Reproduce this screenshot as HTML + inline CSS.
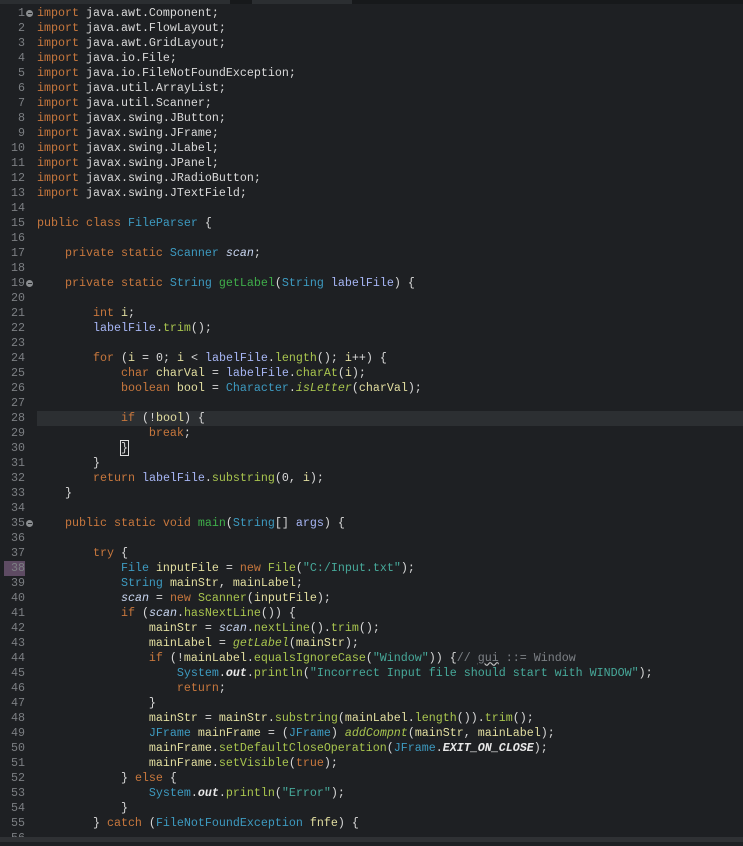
<!DOCTYPE html>
<html><head><meta charset="utf-8"><style>
html,body{margin:0;padding:0;width:743px;height:842px;overflow:hidden;background:#1e2023;}
.top{position:absolute;left:0;top:0;width:743px;height:4px;background:#17191b;}
.top .t1{position:absolute;left:0;top:0;width:230px;height:4px;background:#2b2e31;}
.top .t2{position:absolute;left:252px;top:0;width:100px;height:4px;background:#2b2e31;}
.bot{position:absolute;left:0;top:837px;width:743px;height:5px;background:#2f3134;}
.hl{position:absolute;left:37px;top:410.5px;width:706px;height:15px;background:#2c2f32;}
.ln38{position:absolute;left:4px;top:560.5px;width:21px;height:15px;background:#5e4b63;}
.nums{position:absolute;left:0;top:5.5px;width:25px;text-align:right;}
pre{margin:0;font-family:"Liberation Mono","DejaVu Sans Mono",monospace;font-size:11.67px;line-height:15px;color:#d9d9d9;}
.nums pre{color:#7c7f83;}
.code{position:absolute;left:37px;top:5.5px;}
.fold{position:absolute;left:26px;width:7px;height:7px;border-radius:50%;background:#8a8d90;}
.fold:after{content:"";position:absolute;left:1.5px;top:3px;width:4px;height:1px;background:#2a2c2e;}
.k{color:#c7773d}.t{color:#3d9ac0}.v{color:#e2dea0}.p{color:#a7b6f5}.m{color:#a8c44e}.g{color:#3fae4a}
.s{color:#47a99a}.c{color:#7d8186}.f{color:#c9d6f0;font-style:italic}.b{font-weight:bold;font-style:italic;color:#e8e8e8}.i{font-style:italic}
.n{color:#d9d9d9}.cur{outline:1px solid #e0e0e0;}
.sq{text-decoration:underline wavy #c0c0c0;}
</style></head><body>
<div class="top"><div class="t1"></div><div class="t2"></div></div>
<div class="hl"></div>
<div class="ln38"></div>
<div class="fold" style="top:9.5px"></div>
<div class="fold" style="top:279.5px"></div>
<div class="fold" style="top:519.5px"></div>
<div class="nums"><pre>1
2
3
4
5
6
7
8
9
10
11
12
13
14
15
16
17
18
19
20
21
22
23
24
25
26
27
28
29
30
31
32
33
34
35
36
37
38
39
40
41
42
43
44
45
46
47
48
49
50
51
52
53
54
55
56</pre></div>
<div class="code"><pre><span class="k">import</span> java.awt.Component;
<span class="k">import</span> java.awt.FlowLayout;
<span class="k">import</span> java.awt.GridLayout;
<span class="k">import</span> java.io.File;
<span class="k">import</span> java.io.FileNotFoundException;
<span class="k">import</span> java.util.ArrayList;
<span class="k">import</span> java.util.Scanner;
<span class="k">import</span> javax.swing.JButton;
<span class="k">import</span> javax.swing.JFrame;
<span class="k">import</span> javax.swing.JLabel;
<span class="k">import</span> javax.swing.JPanel;
<span class="k">import</span> javax.swing.JRadioButton;
<span class="k">import</span> javax.swing.JTextField;

<span class="k">public class</span> <span class="t">FileParser</span> {

    <span class="k">private static</span> <span class="t">Scanner</span> <span class="f">scan</span>;

    <span class="k">private static</span> <span class="t">String</span> <span class="g">getLabel</span>(<span class="t">String</span> <span class="p">labelFile</span>) {

        <span class="k">int</span> <span class="v">i</span>;
        <span class="p">labelFile</span>.<span class="m">trim</span>();

        <span class="k">for</span> (<span class="v">i</span> = 0; <span class="v">i</span> &lt; <span class="p">labelFile</span>.<span class="m">length</span>(); <span class="v">i</span>++) {
            <span class="k">char</span> <span class="v">charVal</span> = <span class="p">labelFile</span>.<span class="m">charAt</span>(<span class="v">i</span>);
            <span class="k">boolean</span> <span class="v">bool</span> = <span class="t">Character</span>.<span class="m i">isLetter</span>(<span class="v">charVal</span>);

            <span class="k">if</span> (!<span class="v">bool</span>) {
                <span class="k">break</span>;
            <span class="cur">}</span>
        }
        <span class="k">return</span> <span class="p">labelFile</span>.<span class="m">substring</span>(0, <span class="v">i</span>);
    }

    <span class="k">public static void</span> <span class="g">main</span>(<span class="t">String</span>[] <span class="p">args</span>) {

        <span class="k">try</span> {
            <span class="t">File</span> <span class="v">inputFile</span> = <span class="k">new</span> <span class="m">File</span>(<span class="s">"C:/Input.txt"</span>);
            <span class="t">String</span> <span class="v">mainStr</span>, <span class="v">mainLabel</span>;
            <span class="f">scan</span> = <span class="k">new</span> <span class="m">Scanner</span>(<span class="v">inputFile</span>);
            <span class="k">if</span> (<span class="f">scan</span>.<span class="m">hasNextLine</span>()) {
                <span class="v">mainStr</span> = <span class="f">scan</span>.<span class="m">nextLine</span>().<span class="m">trim</span>();
                <span class="v">mainLabel</span> = <span class="m i">getLabel</span>(<span class="v">mainStr</span>);
                <span class="k">if</span> (!<span class="v">mainLabel</span>.<span class="m">equalsIgnoreCase</span>(<span class="s">"Window"</span>)) {<span class="c">// <span class="sq">gui</span> ::= Window</span>
                    <span class="t">System</span>.<span class="b">out</span>.<span class="m">println</span>(<span class="s">"Incorrect Input file should start with WINDOW"</span>);
                    <span class="k">return</span>;
                }
                <span class="v">mainStr</span> = <span class="v">mainStr</span>.<span class="m">substring</span>(<span class="v">mainLabel</span>.<span class="m">length</span>()).<span class="m">trim</span>();
                <span class="t">JFrame</span> <span class="v">mainFrame</span> = (<span class="t">JFrame</span>) <span class="m i">addCompnt</span>(<span class="v">mainStr</span>, <span class="v">mainLabel</span>);
                <span class="v">mainFrame</span>.<span class="m">setDefaultCloseOperation</span>(<span class="t">JFrame</span>.<span class="b">EXIT_ON_CLOSE</span>);
                <span class="v">mainFrame</span>.<span class="m">setVisible</span>(<span class="k">true</span>);
            } <span class="k">else</span> {
                <span class="t">System</span>.<span class="b">out</span>.<span class="m">println</span>(<span class="s">"Error"</span>);
            }
        } <span class="k">catch</span> (<span class="t">FileNotFoundException</span> <span class="v">fnfe</span>) {
</pre></div>
<div class="bot"></div>
</body></html>
